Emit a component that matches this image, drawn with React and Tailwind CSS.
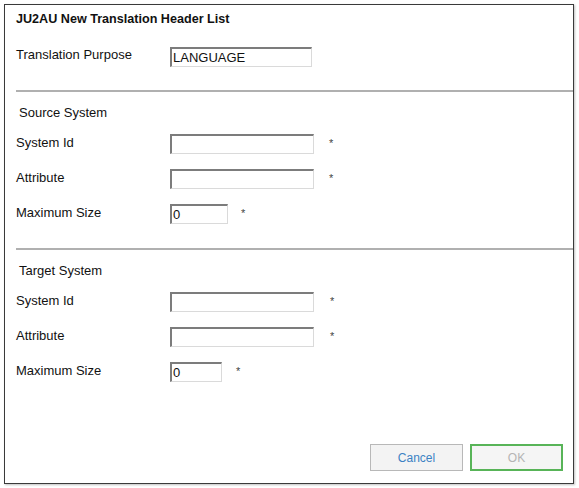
import React from "react";

const font = { fontFamily: '"Liberation Sans", Arial, sans-serif' };

function Field({ label, value = "", width = "w-[144px]", gap = "ml-[15px]", mt = "mt-[15px]" }) {
  return (
    <div className={`flex items-start ${mt}`}>
      <div className="w-[154px] shrink-0 text-[13px] leading-[16px] mt-[1px] text-[#111]">{label}</div>
      <div
        className={`${width} h-[20px] border-t-2 border-l-2 border-r border-b border-t-[#7c7c7c] border-l-[#7c7c7c] border-r-[#dadada] border-b-[#dadada] bg-white text-[13px] leading-[17px] pl-[1px] text-[#111]`}
      >
        {value}
      </div>
      <div className={`${gap} text-[11px] leading-[16px] mt-[1px] text-[#444]`}>*</div>
    </div>
  );
}

export default function App() {
  return (
    <div className="w-[579px] h-[488px] bg-white pt-[4px] pl-[4px]" style={font}>
      <div className="w-[570px] h-[480px] border border-[#3a3a3a] shadow-[1px_1px_2px_rgba(0,0,0,0.25)] flex flex-col">
        <div className="pl-[11px]">
          <div className="mt-[6px] text-[12.6px] leading-[16px] font-bold text-[#111]">
            JU2AU New Translation Header List
          </div>
          <div className="flex items-start mt-[20px]">
            <div className="w-[154px] shrink-0 text-[13px] leading-[16px] text-[#111]">Translation Purpose</div>
            <div className="w-[142px] h-[20px] border-t-2 border-l-2 border-r border-b border-t-[#7c7c7c] border-l-[#7c7c7c] border-r-[#dadada] border-b-[#dadada] text-[13px] leading-[17px] pl-[1px] text-[#111]">
              LANGUAGE
            </div>
          </div>
        </div>

        <div className="ml-[11px] mt-[23px] h-[2px] bg-[#b0b0b0]" />

        <div className="pl-[11px]">
          <div className="mt-[13px] pl-[3px] text-[13px] leading-[16px] text-[#111]">Source System</div>
          <Field label="System Id" mt="mt-[13px]" />
          <Field label="Attribute" />
          <Field label="Maximum Size" value="0" width="w-[58px]" gap="ml-[13px]" />
        </div>

        <div className="ml-[11px] mt-[24px] h-[2px] bg-[#b0b0b0]" />

        <div className="pl-[11px]">
          <div className="mt-[13px] pl-[3px] text-[13px] leading-[16px] text-[#111]">Target System</div>
          <Field label="System Id" mt="mt-[13px]" gap="ml-[16px]" />
          <Field label="Attribute" gap="ml-[16px]" />
          <Field label="Maximum Size" value="0" width="w-[52px]" gap="ml-[14px]" />
        </div>

        <div className="mt-auto pb-[12px] pr-[10px] flex justify-end gap-[7px]">
          <button className="w-[93px] h-[27px] border border-[#b8b8b8] bg-[#f3f3f3] text-[12px] text-[#3b82c4]">
            Cancel
          </button>
          <button className="w-[93px] h-[27px] border-2 border-[#58b458] bg-[#f5f5f5] text-[12px] text-[#b4b4b4]">
            OK
          </button>
        </div>
      </div>
    </div>
  );
}
